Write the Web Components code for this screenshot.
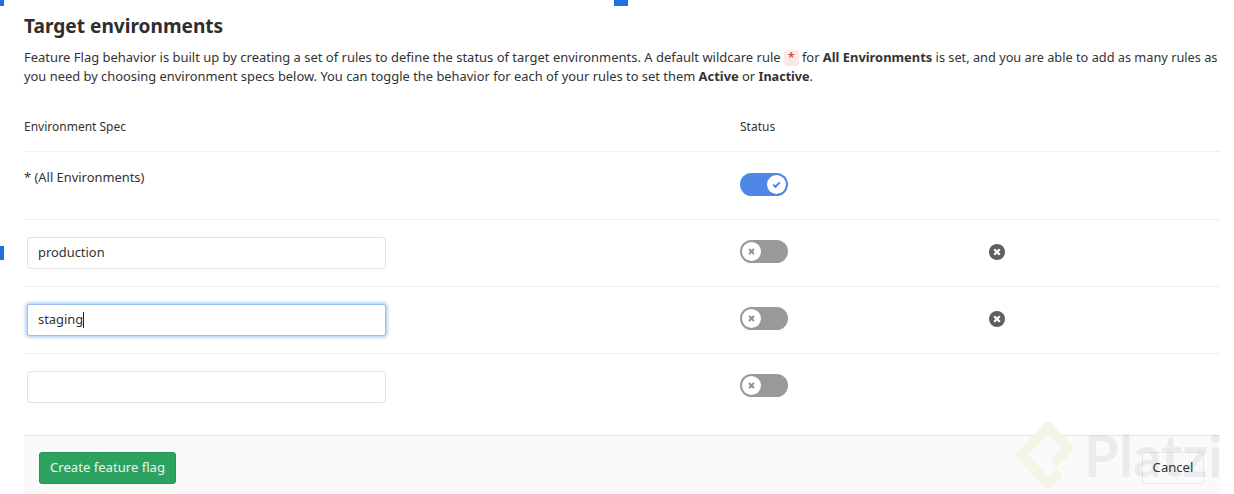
<!DOCTYPE html>
<html>
<head>
<meta charset="utf-8">
<style>
  html, body { margin: 0; padding: 0; background: #fff; }
  body { width: 1234px; height: 494px; overflow: hidden; position: relative; }
</style>
</head>
<body>
<flag-page></flag-page>
<script>
const FONT = `"Noto Sans", "Open Sans", sans-serif`;

class EnvToggle extends HTMLElement {
  connectedCallback() {
    const on = this.hasAttribute('on');
    this.attachShadow({ mode: 'open' }).innerHTML = `
      <style>
        :host { display: block; width: 48px; height: 23px; }
        .track { display: flex; align-items: center; height: 100%; box-sizing: border-box; padding: 0 2px; border-radius: 12px;
          background: ${on ? '#4f87e6' : '#999'}; justify-content: ${on ? 'flex-end' : 'flex-start'}; }
        .knob { width: 19px; height: 19px; border-radius: 50%; background: #fff; display: flex; align-items: center; justify-content: center; }
      </style>
      <div class="track"><div class="knob">
        ${on
          ? '<svg width="11" height="11" viewBox="0 0 11 11"><path d="M2.2 5.6 4.4 7.8 8.8 3.4" fill="none" stroke="#4f87e6" stroke-width="2"/></svg>'
          : '<svg width="9" height="9" viewBox="0 0 9 9"><path d="M2 2 7 7M7 2 2 7" fill="none" stroke="#8f8f8f" stroke-width="1.8"/></svg>'}
      </div></div>`;
  }
}
customElements.define('env-toggle', EnvToggle);

class EnvRemove extends HTMLElement {
  constructor() {
    super();
    this.attachShadow({ mode: 'open' }).innerHTML = `
      <style>:host { display: block; width: 16px; height: 16px; } svg { display: block; }</style>
      <svg width="16" height="16" viewBox="0 0 16 16"><circle cx="8" cy="8" r="8" fill="#5e5e5e"/><path d="M5.2 5.2 10.8 10.8M10.8 5.2 5.2 10.8" stroke="#fff" stroke-width="2.3"/></svg>`;
  }
}
customElements.define('env-remove', EnvRemove);

class EnvRow extends HTMLElement {
  connectedCallback() {
    const label = this.getAttribute('label');
    const value = this.getAttribute('value');
    const focused = this.hasAttribute('focused');
    const on = this.hasAttribute('on');
    const first = label
      ? `<div class="label">${label}</div>`
      : `<div class="input ${focused ? 'focus' : ''}">${value || ''}${focused ? '<i></i>' : ''}</div>`;
    this.attachShadow({ mode: 'open' }).innerHTML = `
      <style>
        :host { display: grid; grid-template-columns: 716px 248px 1fr; height: 67px; border-top: 1px solid #f0f0f0; box-sizing: border-box; font: 12.9px/17px ${FONT}; color: #333; }
        :host([label]) { height: 68px; }
        :host([label]) .status { padding-top: 21px; }
        .spec { padding: 17px 0 0 3px; }
        .label { margin: 0 0 0 -3px; }
        .input { width: 359px; height: 32px; box-sizing: border-box; border: 1px solid #e2e2e2; border-radius: 3px; padding: 0 10px 1px; display: flex; align-items: center; background: #fff; }
        .focus { border-color: #97c0f0; box-shadow: 0 0 3px 2px #bcd7f7; }
        .input i { display: block; width: 1px; height: 16px; background: #222; }
        .status { padding-top: 20px; }
        .remove { padding: 24px 0 0 1px; }
      </style>
      <div class="spec">${first}</div>
      <div class="status"><env-toggle ${on ? 'on' : ''}></env-toggle></div>
      <div class="remove">${this.hasAttribute('removable') ? '<env-remove></env-remove>' : ''}</div>`;
  }
}
customElements.define('env-row', EnvRow);

class FlagFooter extends HTMLElement {
  constructor() {
    super();
    this.attachShadow({ mode: 'open' }).innerHTML = `
      <style>
        :host { display: flex; justify-content: space-between; align-items: flex-start; height: 59px; box-sizing: border-box; padding: 16px 16px 0 15px; background: #fafafa; border-top: 1px solid #e5e5e5; font: 13.1px/17px ${FONT}; }
        .create { height: 32px; width: 137px; box-sizing: border-box; padding-bottom: 1px; display: flex; align-items: center; justify-content: center; white-space: nowrap; background: #2da160; border: 1px solid #28925a; border-radius: 3px; color: #e9f6ee; }
        .cancel { height: 32px; width: 62px; box-sizing: border-box; padding-bottom: 1px; display: flex; align-items: center; justify-content: center; border: 1px solid #e8e8e8; border-radius: 3px; color: #333; }
      </style>
      <div class="create">Create feature flag</div>
      <div class="cancel">Cancel</div>`;
  }
}
customElements.define('flag-footer', FlagFooter);

class PlatziMark extends HTMLElement {
  constructor() {
    super();
    this.attachShadow({ mode: 'open' }).innerHTML = `
      <style>
        :host { position: absolute; left: 1016px; top: 420px; width: 218px; height: 70px; pointer-events: none; }
        svg { position: absolute; left: 0; top: 0; }
        span { position: absolute; left: 68px; top: 0; font: 700 56.5px/70px "Lato", sans-serif; color: rgba(0,0,0,.06); }
      </style>
      <svg width="60" height="70" viewBox="0 0 60 70"><path d="M37 44 53 28 32 7 5 35 32 63 44 53" fill="none" stroke="#f3f6e6" stroke-width="10" stroke-linejoin="round"/></svg>
      <span>Platzi</span>`;
  }
}
customElements.define('platzi-mark', PlatziMark);

class FlagPage extends HTMLElement {
  constructor() {
    super();
    this.attachShadow({ mode: 'open' }).innerHTML = `
      <style>
        :host { display: block; padding: 14px 14px 0 24px; font: 12.9px/20px ${FONT}; color: #333; height: 494px; box-sizing: border-box; }
        h3 { margin: 0 0 9px; font: 700 19.1px/24px ${FONT}; color: #2e2e2e; }
        .line { white-space: nowrap; height: 20px; }
        .line + .line { margin-top: -1px; }
        .a { font-size: 12.98px; }
        .c { font-size: 12.75px; }
        .d { font-size: 12.6px; }
        code { display: inline-block; padding: 0 4px; background: #fbe9e7; color: #c0341d; border-radius: 3px; font: 12px/16px ${FONT}; }
        .head { display: grid; grid-template-columns: 716px 1fr; margin-top: 32px; height: 33px; line-height: 17px; font-size: 12px; }
        .rows { width: 1196px; }
        .spacer { height: 15px; }
        .mark { position: absolute; background: #1f6fe0; }
      </style>
      <h3>Target environments</h3>
      <div class="line"><span class="a">Feature Flag behavior is built up by creating a set of rules to define the status of target environments. A default wildcare rule</span> <code>*</code> for <b>All Environments</b> <span class="c">is set, and you are able to add as many rules as</span></div>
      <div class="line">you need by choosing environment specs below. You can toggle the behavior for each of your rules to set them <b>Active</b> or <b class="d">Inactive</b>.</div>
      <div class="rows">
        <div class="head"><div>Environment Spec</div><div>Status</div></div>
        <env-row label="* (All Environments)" on></env-row>
        <env-row value="production" removable></env-row>
        <env-row value="staging" focused removable></env-row>
        <env-row></env-row>
        <div class="spacer"></div>
        <flag-footer></flag-footer>
      </div>
      <platzi-mark></platzi-mark>
      <div class="mark" style="left:0;top:0;width:4px;height:6px"></div>
      <div class="mark" style="left:614px;top:0;width:14px;height:6px"></div>
      <div class="mark" style="left:0;top:246px;width:4px;height:14px"></div>`;
  }
}
customElements.define('flag-page', FlagPage);
</script>
</body>
</html>
